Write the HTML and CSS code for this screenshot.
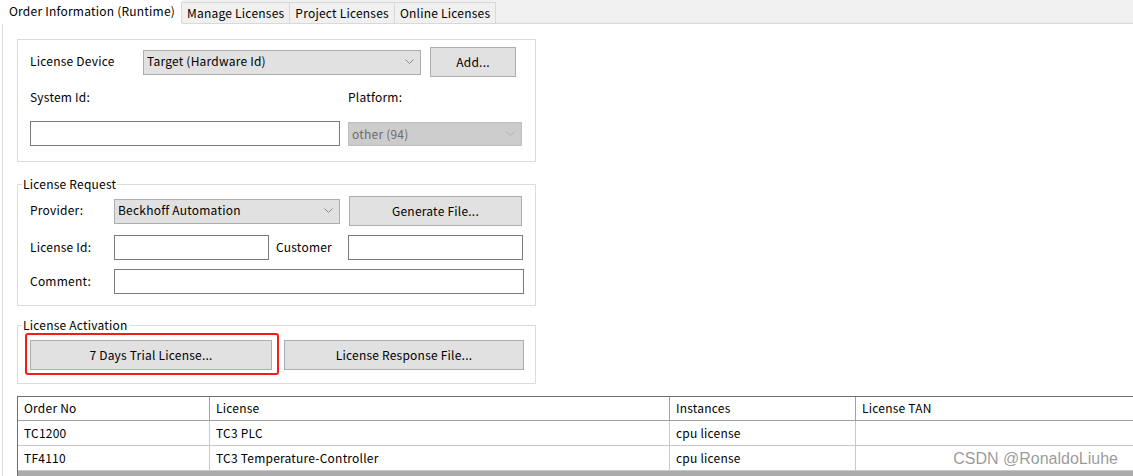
FILE: index.html
```html
<!DOCTYPE html>
<html lang="en">
<head>
  <meta charset="UTF-8" />
  <title>Order Information (Runtime)</title>
  <link rel="stylesheet" href="styles.css">
</head>
<body>
  <div class="tabs">
    <div class="tab active">Order Information (Runtime)</div>
    <div class="tab">Manage Licenses</div>
    <div class="tab">Project Licenses</div>
    <div class="tab">Online Licenses</div>
  </div>

  <div class="panel">
    <!-- license device -->
    <fieldset class="group device">
      <div class="row row-top">
        <span class="label lbl-device">License Device</span>
        <div class="combo combo-device">
          <span>Target (Hardware Id)</span>
          <svg class="chev" width="9" height="6" viewBox="0 0 9 6"><polyline points="0.5,0.5 4.5,4.5 8.5,0.5" /></svg>
        </div>
        <button class="btn btn-add">Add...</button>
      </div>
      <div class="row row-labels">
        <span class="label lbl-system">System Id:</span>
        <span class="label">Platform:</span>
      </div>
      <div class="row row-inputs">
        <input class="field field-system" type="text">
        <div class="combo combo-platform disabled">
          <span>other (94)</span>
          <svg class="chev" width="9" height="6" viewBox="0 0 9 6"><polyline points="0.5,0.5 4.5,4.5 8.5,0.5" /></svg>
        </div>
      </div>
    </fieldset>

    <!-- license request -->
    <fieldset class="group request">
      <legend>License Request</legend>
      <div class="group-body">
        <div class="row">
          <span class="label lbl-req">Provider:</span>
          <div class="combo combo-provider">
            <span>Beckhoff Automation</span>
            <svg class="chev" width="9" height="6" viewBox="0 0 9 6"><polyline points="0.5,0.5 4.5,4.5 8.5,0.5" /></svg>
          </div>
          <button class="btn btn-generate">Generate File...</button>
        </div>
        <div class="row gap-row">
          <span class="label lbl-req">License Id:</span>
          <input class="field field-license" type="text">
          <span class="label lbl-customer">Customer</span>
          <input class="field field-customer" type="text">
        </div>
        <div class="row gap-row">
          <span class="label lbl-req">Comment:</span>
          <input class="field field-comment" type="text">
        </div>
      </div>
    </fieldset>

    <!-- license activation -->
    <fieldset class="group activation">
      <legend>License Activation</legend>
      <div class="group-body">
        <div class="row">
          <span class="marked">
            <button class="btn btn-trial">7 Days Trial License...</button>
          </span>
          <button class="btn btn-response">License Response File...</button>
        </div>
      </div>
    </fieldset>

    <div class="grid-table">
      <div class="tr head">
        <div class="td">Order No</div>
        <div class="td">License</div>
        <div class="td">Instances</div>
        <div class="td">License TAN</div>
      </div>
      <div class="tr">
        <div class="td">TC1200</div>
        <div class="td">TC3 PLC</div>
        <div class="td">cpu license</div>
        <div class="td"></div>
      </div>
      <div class="tr">
        <div class="td">TF4110</div>
        <div class="td">TC3 Temperature-Controller</div>
        <div class="td">cpu license</div>
        <div class="td"></div>
      </div>
    </div>
  </div>

  <div class="watermark">CSDN @RonaldoLiuhe</div>
</body>
</html>
```

FILE: styles.css
```css
body {
  margin: 0;
  font-family: "Noto Sans CJK SC", "Noto Sans", sans-serif;
  font-size: 12px;
  letter-spacing: 0.22px;
  color: #000;
  background: #fff;
  height: 476px;
  overflow: hidden;
  position: relative;
}

/* tab strip */
.tabs {
  display: flex;
  align-items: flex-end;
  height: 24px;
  box-sizing: border-box;
  background: #f0f0f0;
  border-bottom: 1px solid #d9d9d9;
}

.tab {
  height: 21px;
  line-height: 19px;
  box-sizing: border-box;
  padding: 0 5px;
  border: 1px solid #d9d9d9;
  border-bottom: none;
  margin-left: -1px;
  background: #f0f0f0;
  white-space: nowrap;
}

.tab.active {
  height: 24px;
  line-height: 22px;
  margin-bottom: -1px;
  margin-left: 0;
  padding: 0 7px 0 9px;
  border: none;
  background: #fff;
}

/* content panel */
.panel {
  margin-left: 2px;
  border-left: 1px solid #dadada;
  padding: 15px 0 0 14px;
  height: 452px;
  box-sizing: border-box;
  overflow: hidden;
}

.group {
  margin: 0;
  width: 519px;
  box-sizing: border-box;
  border: 1px solid #dcdcdc;
  padding: 0;
  min-width: 0;
}

.group legend {
  margin-left: 4px;
  padding: 0 1px;
  line-height: 14px;
}

.device {
  padding: 7px 0 15px 12px;
}

.request {
  margin-top: 15px;
}

.activation {
  margin-top: 12px;
}

.group-body {
  padding: 5px 0 11px 12px;
}

.activation .group-body {
  padding: 8px 0 13px 12px;
}

.row {
  display: flex;
  align-items: center;
}

.gap-row {
  margin-top: 9px;
}

.label {
  white-space: nowrap;
  line-height: 14px;
  margin-top: -2px;
}

.lbl-device { width: 113px; }
.lbl-system { width: 318px; }
.lbl-req { width: 84px; }
.lbl-customer { width: 72px; margin-left: 7px; }

.row-labels {
  margin-top: 11px;
  height: 20px;
}

.row-inputs {
  margin-top: 13px;
}

/* combo boxes */
.combo {
  display: flex;
  align-items: center;
  justify-content: space-between;
  box-sizing: border-box;
  height: 25px;
  padding: 0 6px 0 3px;
  background: #e1e1e1;
  border: 1px solid #adadad;
}

.combo span {
  line-height: 14px;
  margin-top: -3px;
}

.chev polyline {
  fill: none;
  stroke: #8a8a8a;
  stroke-width: 1;
}

.combo-device { width: 278px; }
.combo-provider { width: 226px; }

.combo-platform {
  width: 174px;
  height: 24px;
  margin-left: 8px;
}

.combo.disabled {
  background: #cccccc;
  border-color: #bfbfbf;
  color: #6d6d6d;
}

.combo.disabled span {
  margin-top: 0;
}

.combo.disabled .chev polyline {
  stroke: #b0b0b0;
}

/* text fields */
.field {
  box-sizing: border-box;
  height: 25px;
  margin: 0;
  padding: 0 3px;
  border: 1px solid #7a7a7a;
  background: #fff;
  font: inherit;
}

.field-system { width: 310px; }
.field-license { width: 155px; }
.field-customer { width: 175px; }
.field-comment { width: 410px; }

/* buttons */
.btn {
  box-sizing: border-box;
  height: 30px;
  margin: 0;
  padding: 0 0 2px;
  background: #e1e1e1;
  border: 1px solid #adadad;
  border-radius: 0;
  font: inherit;
  letter-spacing: inherit;
  color: #000;
}

.btn-add {
  width: 86px;
  margin-left: 9px;
}

.btn-generate {
  width: 173px;
  margin-left: 9px;
}

.btn-trial {
  width: 242px;
  display: block;
}

.btn-response {
  width: 240px;
  margin-left: 12px;
}

/* red annotation round the trial button */
.marked {
  position: relative;
  display: block;
}

.marked::after {
  content: "";
  position: absolute;
  left: -5px;
  right: -7px;
  top: -7px;
  bottom: -5px;
  border: 2px solid #f21c1c;
  border-radius: 3px;
}

/* license grid */
.grid-table {
  margin-top: 12px;
  height: 80px;
  width: 1125px;
  background: #ababab;
  border-top: 1px solid #6e6e6e;
  border-left: 1px solid #6e6e6e;
}

.tr {
  display: grid;
  grid-template-columns: 192px 460px 186px 1fr;
  background: #fff;
}

.td {
  height: 25px;
  line-height: 23px;
  box-sizing: border-box;
  padding-left: 6px;
  border-right: 1px solid #c8c8c8;
  border-bottom: 1px solid #c8c8c8;
  white-space: nowrap;
}

.tr.head .td {
  height: 24px;
  line-height: 22px;
  border-color: #a0a0a0;
}

.watermark {
  position: absolute;
  right: 15px;
  top: 450px;
  font-family: "Liberation Sans", Arial, sans-serif;
  font-size: 16px;
  letter-spacing: 0;
  color: rgba(120, 120, 120, 0.75);
}
```
